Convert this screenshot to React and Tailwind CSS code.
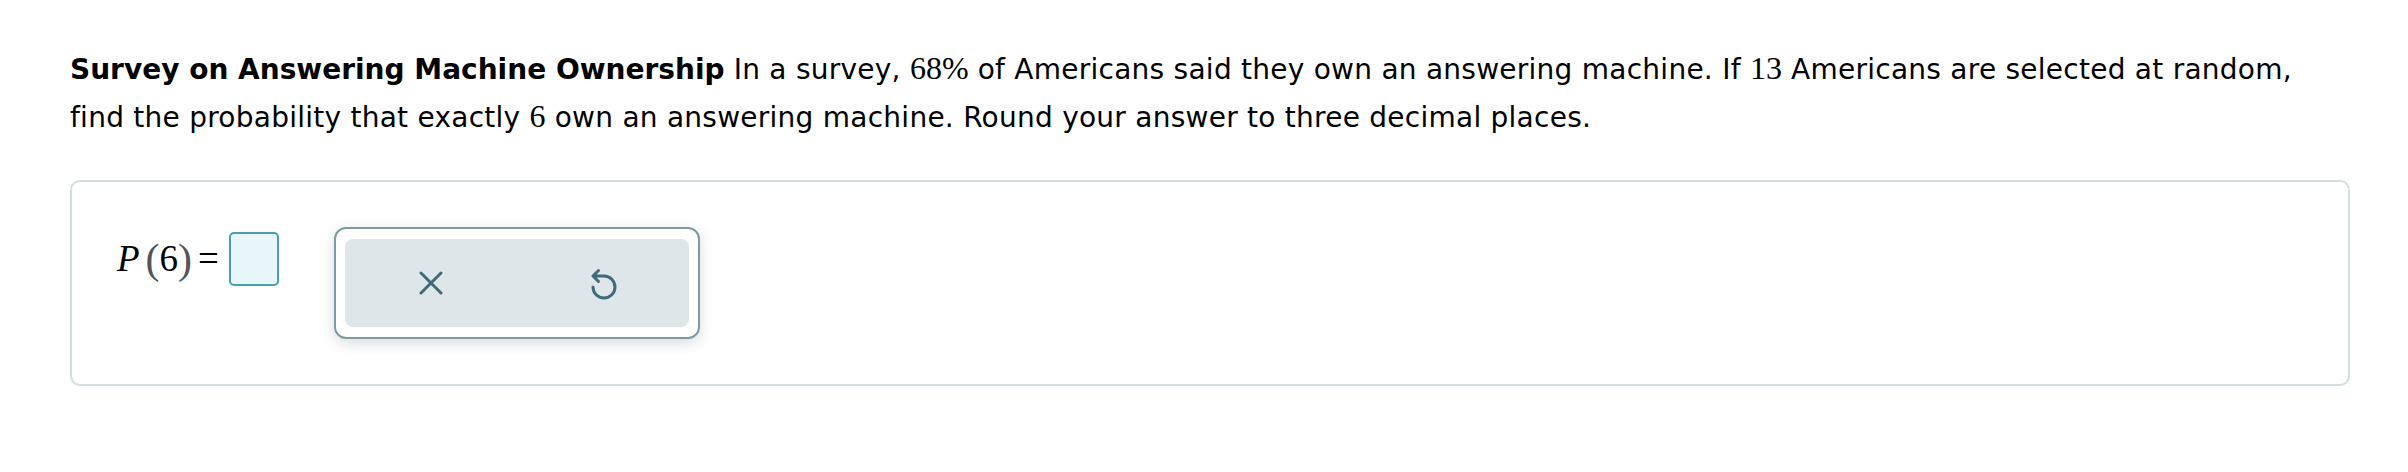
const Num = ({ children }) => (
  <span className="text-[32px] leading-none tracking-normal font-['Liberation_Serif',serif]">{children}</span>
);

const CloseIcon = () => (
  <svg width="24" height="24" viewBox="0 0 24 24" fill="none">
    <path d="M2 2L22 22M22 2L2 22" stroke="#3f6b78" strokeWidth="3" strokeLinecap="round" />
  </svg>
);

const UndoIcon = () => (
  <svg width="30" height="34" viewBox="0 0 30 34" fill="none">
    <path
      d="M5 9H16A11 11 0 1 1 5 20M5 9L10.5 3.5M5 9L10.5 14.5"
      stroke="#3f6b78"
      strokeWidth="3"
      strokeLinecap="round"
      strokeLinejoin="round"
    />
  </svg>
);

const App = () => {
  return (
    <div className="min-h-[472px] w-[2408px] bg-white pt-[46px] pl-[70px] pr-[58px] font-['DejaVu_Sans',sans-serif] text-black">
      <p className="text-[28px] leading-[48px] tracking-[0.25px]">
        <span className="font-bold tracking-normal">Survey on Answering Machine Ownership</span> In a survey,{' '}
        <Num>68%</Num> of Americans said they own an answering machine. If <Num>13</Num>{' '}
        Americans are selected at random, find the probability that exactly <Num>6</Num> own an
        answering machine. Round your answer to three decimal places.
      </p>

      {/* Answer area */}
      <div className="mt-[38px] h-[206px] rounded-[10px] border-2 border-[#d4dde0] pt-[45px] pl-[45px]">
        <div className="flex items-start">
          <div className="flex items-center pt-[5px]">
            <span className="font-['Liberation_Serif',serif] text-[37px] leading-[54px] flex items-center">
              <span className="italic">P</span>
              <span className="ml-[6px] text-[42px] text-[#555]">(</span>
              <span>6</span>
              <span className="text-[42px] text-[#555]">)</span>
              <span className="ml-[6px]">=</span>
            </span>
            <div className="ml-[10px] h-[54px] w-[50px] rounded-[5px] border-2 border-[#4a9fae] bg-[#e8f6fa]" />
          </div>

          {/* Keypad */}
          <div className="ml-[55px] rounded-[12px] border-2 border-[#7d9ba3] bg-white p-[9px] pt-[10px] pb-[10px] shadow-[0_4px_14px_rgba(40,60,70,0.18)]">
            <div className="flex h-[88px] w-[344px] rounded-[8px] bg-[#dfe6e9]">
              <button className="flex flex-1 items-center justify-center">
                <CloseIcon />
              </button>
              <button className="flex flex-1 items-center justify-center pt-[2px]">
                <UndoIcon />
              </button>
            </div>
          </div>
        </div>
      </div>
    </div>
  );
};

export default App;
